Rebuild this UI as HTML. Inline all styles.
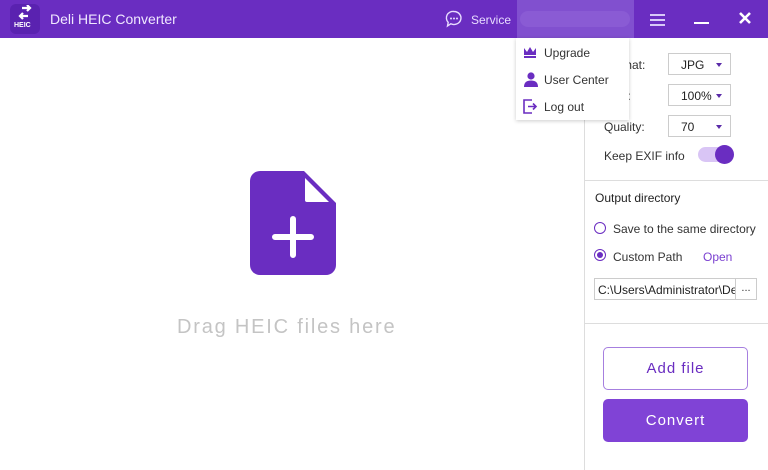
<!DOCTYPE html>
<html><head><meta charset="utf-8"><style>
*{margin:0;padding:0;box-sizing:border-box}
body{width:768px;height:470px;overflow:hidden;background:#fff;font-family:"Liberation Sans",sans-serif;position:relative;color:#333}
.hdr{position:absolute;left:0;top:0;width:768px;height:38px;background:#6a2dc1}
.abs{position:absolute}
.sel{position:absolute;left:668px;width:63px;height:22px;border:1px solid #ccc;font-size:12px;padding:4px 0 0 12px;color:#222}
.sel:after{content:"";position:absolute;right:8px;top:9px;border:3px solid transparent;border-top:4px solid #5a2aa8}
.lbl{position:absolute;font-size:12px;color:#333}
</style></head><body>
<div class="hdr"></div>
<div class="abs" style="left:517px;top:0;width:117px;height:38px;background:#8150cf"></div>
<div class="abs" style="left:520px;top:11px;width:110px;height:16px;border-radius:8px;background:#8a5bd4"></div>
<div class="abs" style="left:10px;top:4px;width:30px;height:30px;border-radius:6px;background:#5a22b0"></div>
<svg class="abs" style="left:13px;top:5px" width="24" height="16" viewBox="0 0 24 16"><path d="M9 3h8M14 0l3 3-3 3M15 11H7M10 8l-3 3 3 3" stroke="#fff" stroke-width="2.2" fill="none"/></svg>
<div class="abs" style="left:14px;top:22px;font-size:7px;font-weight:bold;color:#fff">HEIC</div>
<div class="abs" style="left:50px;top:11px;font-size:14px;color:#f0e8ff">Deli HEIC Converter</div>
<svg class="abs" style="left:445px;top:10px" width="18" height="18" viewBox="0 0 18 18"><path d="M9 1.5a7 6.5 0 1 1-3.2 12.3L2.5 16l.7-3.6A6.5 6.5 0 0 1 9 1.5z" stroke="#e8dcff" stroke-width="1.4" fill="none"/><circle cx="6" cy="8.5" r="1" fill="#e8dcff"/><circle cx="9" cy="8.5" r="1" fill="#e8dcff"/><circle cx="12" cy="8.5" r="1" fill="#e8dcff"/></svg>
<div class="abs" style="left:471px;top:13px;font-size:12px;color:#e8dcff">Service</div>
<div class="abs" style="left:650px;top:14px;width:15px;height:2px;background:#d8c8f8;box-shadow:0 5px 0 #d8c8f8,0 10px 0 #d8c8f8"></div>
<div class="abs" style="left:694px;top:22px;width:15px;height:2px;background:#fff"></div>
<svg class="abs" style="left:738px;top:11px" width="14" height="14"><path d="M2 2l10 10M12 2L2 12" stroke="#fff" stroke-width="2.6"/></svg>
<div class="abs" style="left:584px;top:38px;width:1px;height:432px;background:#ddd"></div>
<div class="abs" style="left:585px;top:180px;width:183px;height:1px;background:#ddd"></div>
<div class="abs" style="left:585px;top:323px;width:183px;height:1px;background:#ddd"></div>
<div class="lbl" style="left:604px;top:58px">Format:</div>
<div class="sel" style="top:53px">JPG</div>
<div class="lbl" style="left:604px;top:89px">Size:</div>
<div class="sel" style="top:84px">100%</div>
<div class="lbl" style="left:604px;top:120px">Quality:</div>
<div class="sel" style="top:115px">70</div>
<div class="lbl" style="left:604px;top:149px">Keep EXIF info</div>
<div class="abs" style="left:698px;top:147px;width:34px;height:15px;border-radius:8px;background:#d9c5f5"></div>
<div class="abs" style="left:715px;top:145px;width:19px;height:19px;border-radius:50%;background:#6a2dc1"></div>
<div class="lbl" style="left:595px;top:191px;color:#222">Output directory</div>
<div class="abs" style="left:594px;top:222px;width:12px;height:12px;border:1px solid #6a2dc1;border-radius:50%"></div>
<div class="lbl" style="left:613px;top:222px">Save to the same directory</div>
<div class="abs" style="left:594px;top:249px;width:12px;height:12px;border:1px solid #6a2dc1;border-radius:50%"></div>
<div class="abs" style="left:597px;top:252px;width:6px;height:6px;background:#6a2dc1;border-radius:50%"></div>
<div class="lbl" style="left:613px;top:250px">Custom Path</div>
<div class="lbl" style="left:703px;top:250px;color:#7a3fd0">Open</div>
<div class="abs" style="left:594px;top:278px;width:163px;height:22px;border:1px solid #ccc;font-size:12px;padding:4px 0 0 3px;overflow:hidden;white-space:nowrap;color:#222">C:\Users\Administrator\De</div>
<div class="abs" style="left:735px;top:278px;width:22px;height:22px;border:1px solid #ccc;background:#fff;font-size:11px;text-align:center;padding-top:3px">...</div>
<div class="abs" style="left:603px;top:347px;width:145px;height:43px;border:1px solid #a67fdf;border-radius:5px;text-align:center;line-height:41px;font-size:15px;letter-spacing:1px;color:#6a2dc1">Add file</div>
<div class="abs" style="left:603px;top:399px;width:145px;height:43px;background:#8043d6;border-radius:5px;text-align:center;line-height:43px;font-size:15px;letter-spacing:1px;color:#fff">Convert</div>
<div class="abs" style="left:516px;top:38px;width:113px;height:82px;background:#fff;box-shadow:0 1px 4px rgba(0,0,0,.2)"></div>
<svg class="abs" style="left:523px;top:46px" width="14" height="12"><path d="M1 2l3 4 3-5 3 5 3-4v7H1z" fill="#6a2dc1"/><rect x="1" y="10" width="12" height="2" fill="#6a2dc1"/></svg>
<div class="lbl" style="left:544px;top:46px">Upgrade</div>
<svg class="abs" style="left:524px;top:72px" width="14" height="15"><circle cx="7" cy="4" r="3.6" fill="#6a2dc1"/><path d="M0 15c0-5 3-6.5 7-6.5s7 1.5 7 6.5z" fill="#6a2dc1"/></svg>
<div class="lbl" style="left:544px;top:73px">User Center</div>
<svg class="abs" style="left:523px;top:99px" width="15" height="15"><path d="M9 1H1v13h8M5 7.5h8M10 4.5l3 3-3 3" stroke="#6a2dc1" stroke-width="1.6" fill="none"/></svg>
<div class="lbl" style="left:544px;top:100px">Log out</div>
<svg class="abs" style="left:250px;top:171px" width="86" height="104" viewBox="0 0 86 104"><path d="M10 0h44l32 32v62a10 10 0 0 1-10 10H10A10 10 0 0 1 0 94V10A10 10 0 0 1 10 0z" fill="#6a2dc1"/><path d="M55 7v22a2 2 0 0 0 2 2h22z" fill="#fff"/><path d="M43 48v36M25 66h36" stroke="#fff" stroke-width="6" stroke-linecap="round"/></svg>
<div class="abs" style="left:177px;top:316px;font-size:20px;letter-spacing:1.8px;color:#c4c4c4">Drag HEIC files here</div>
</body></html>
